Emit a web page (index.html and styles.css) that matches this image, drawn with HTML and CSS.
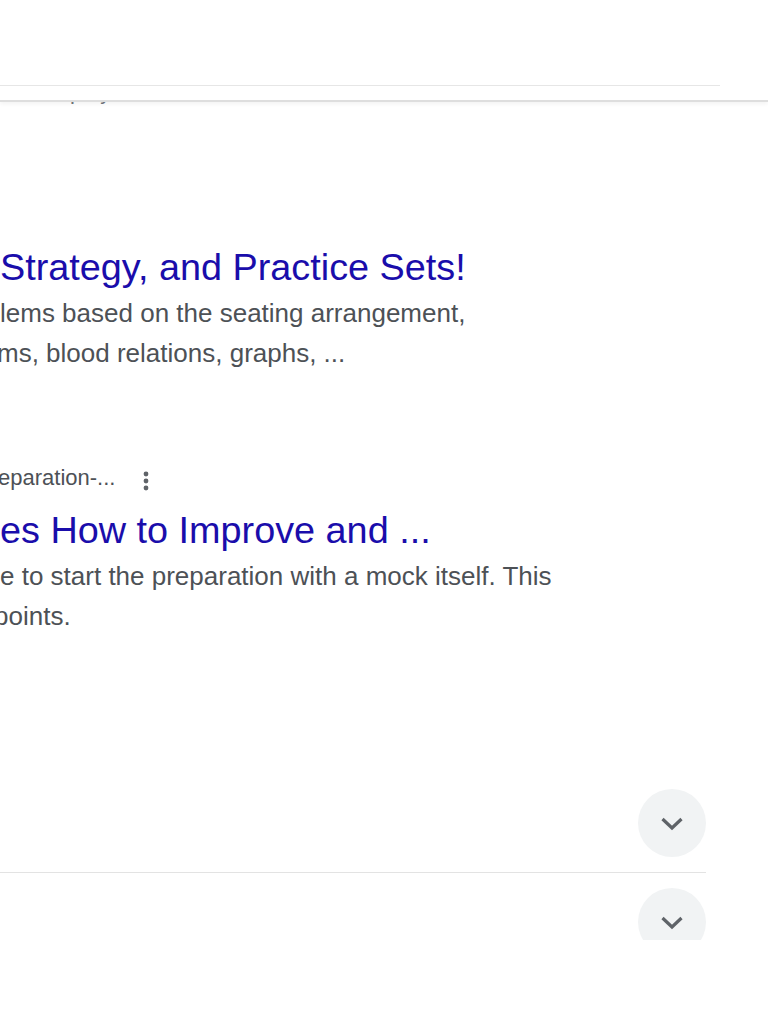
FILE: index.html
```html
<!DOCTYPE html>
<html lang="en">
<head>
<meta charset="utf-8">
<title>Search results</title>
<link rel="stylesheet" href="styles.css">
</head>
<body>
<header class="topbar">
  <div class="tabs"></div>
</header>
<main class="results">
  <div class="peek"><span class="peek-line"><span class="pk1">p</span><span class="pk2">y</span></span></div>

  <section class="result r1">
    <h3 class="title">Strategy, and Practice Sets!</h3>
    <div class="snippet">
      <div class="line">lems based on the seating arrangement,</div>
      <div class="line shift-m">ms, blood relations, graphs, ...</div>
    </div>
  </section>

  <section class="result r2">
    <div class="url-row">
      <span class="url">eparation-...</span>
      <svg class="dots" width="6" height="30" viewBox="0 0 6 30" aria-hidden="true">
        <circle cx="3" cy="11" r="2.4" fill="#5f6368"/>
        <circle cx="3" cy="18" r="2.4" fill="#5f6368"/>
        <circle cx="3" cy="25" r="2.4" fill="#5f6368"/>
      </svg>
    </div>
    <h3 class="title t2">es How to Improve and ...</h3>
    <div class="snippet s2">
      <div class="line">e to start the preparation with a mock itself. This</div>
      <div class="line shift-p">points.</div>
    </div>
  </section>

  <div class="more">
    <div class="more-row first">
      <span class="chev">
        <svg width="24" height="14" viewBox="0 0 24 14" aria-hidden="true"><polyline points="2.5,2 12,11 21.5,2" fill="none" stroke="#5f6368" stroke-width="3.2"/></svg>
      </span>
    </div>
    <div class="more-row second">
      <span class="chev">
        <svg width="24" height="14" viewBox="0 0 24 14" aria-hidden="true"><polyline points="2.5,2 12,11 21.5,2" fill="none" stroke="#5f6368" stroke-width="3.2"/></svg>
      </span>
    </div>
  </div>
</main>
</body>
</html>
```

FILE: styles.css
```css
html, body {
  margin: 0;
  padding: 0;
  background: #ffffff;
}

body {
  font-family: "Liberation Sans", Arial, sans-serif;
  width: 768px;
  overflow: hidden;
}

.topbar {
  position: relative;
  z-index: 2;
  height: 100px;
  background: #ffffff;
  box-shadow: 0 2px 0 #dedede, 0 4px 4px rgba(0, 0, 0, 0.05);
}

.tabs {
  width: 720px;
  height: 86px;
  border-bottom: 1px solid #e6e6e6;
  box-sizing: border-box;
}

.results {
  position: relative;
  z-index: 1;
}

.peek {
  height: 6px;
  overflow: hidden;
}

.peek-line {
  display: block;
  margin-top: -19px;
  font-size: 22px;
  line-height: 22px;
  color: #70757a;
  white-space: nowrap;
}

.pk1 { margin-left: 70px; }
.pk2 { margin-left: 18px; }

.result {
  white-space: nowrap;
}

.title {
  margin: 0;
  font-weight: normal;
  font-size: 37.8px;
  line-height: 48px;
  color: #1a0dab;
}

.r1 .title {
  margin-top: 137px;
}

.snippet {
  margin-top: 2px;
  font-size: 26px;
  line-height: 40px;
  color: #4d5156;
}

.shift-m { margin-left: -3px; }
.shift-p { margin-left: -6px; }

.r2 {
  margin-top: 90px;
}

.url-row {
  display: flex;
  align-items: flex-start;
  height: 30px;
}

.url {
  font-size: 22px;
  line-height: 30px;
  color: #4d5156;
  margin-left: -2px;
}

.dots {
  margin-left: 28px;
  display: block;
}

.t2 {
  margin-top: 13px;
}

.s2 {
  margin-top: 2px;
}

.more {
  width: 706px;
}

.more-row {
  display: flex;
  justify-content: flex-end;
}

.more-row.first {
  padding-top: 153px;
  padding-bottom: 15px;
  border-bottom: 1px solid #e3e3e3;
}

.more-row.second {
  padding-top: 15px;
  height: 52px;
  overflow: hidden;
  align-items: flex-start;
}

.chev {
  width: 68px;
  height: 68px;
  border-radius: 50%;
  background: #f1f3f4;
  display: flex;
  align-items: center;
  justify-content: center;
  flex: none;
}

.chev svg {
  display: block;
  margin-top: 1px;
}
```
